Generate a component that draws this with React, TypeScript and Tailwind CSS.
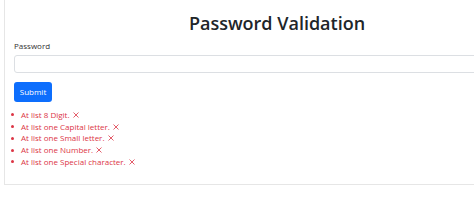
import React from "react";

const rules = [
  "At list 8 Digit.",
  "At list one Capital letter.",
  "At list one Small letter.",
  "At list one Number.",
  "At list one Special character.",
];

function Cross() {
  return (
    <svg width="6" height="6" viewBox="0 0 6 6" className="ml-[3px] inline-block">
      <path d="M0.5 0.5L5.5 5.5M5.5 0.5L0.5 5.5" stroke="#dc3545" strokeWidth="0.8" fill="none" />
    </svg>
  );
}

export default function App() {
  return (
    <div className="w-[474px] h-[212px] overflow-hidden bg-white font-['Open_Sans','Noto_Sans',sans-serif] text-[#212529]">
      <div className="ml-[4px] w-[546px] border-x border-b border-[#e6e6e6] px-[9px] pb-[16px]">
        <h1 className="pt-[11px] text-center text-[18px] leading-[24px] font-semibold">
          Password Validation
        </h1>
        <label htmlFor="password" className="mt-[5px] block text-[8px] leading-[12px] text-[#333]">
          Password
        </label>
        <input
          id="password"
          type="password"
          className="mt-[3px] block h-[18px] w-full rounded-[3px] border border-[#dcdfe3] bg-white"
        />
        <button className="mt-[9px] block h-[20px] w-[38px] rounded-[3px] bg-[#0d6efd] text-[8px] text-white">
          Submit
        </button>
        <ul className="mt-[7px] -ml-[3px] text-[8px] text-[#dc3545]">
          {rules.map((r) => (
            <li key={r} className="flex h-[11.75px] items-center gap-[7px]">
              <span className="h-[3px] w-[3px] rounded-full bg-[#dc3545]" />
              <span className="flex items-center">
                {r}
                <Cross />
              </span>
            </li>
          ))}
        </ul>
      </div>
    </div>
  );
}
